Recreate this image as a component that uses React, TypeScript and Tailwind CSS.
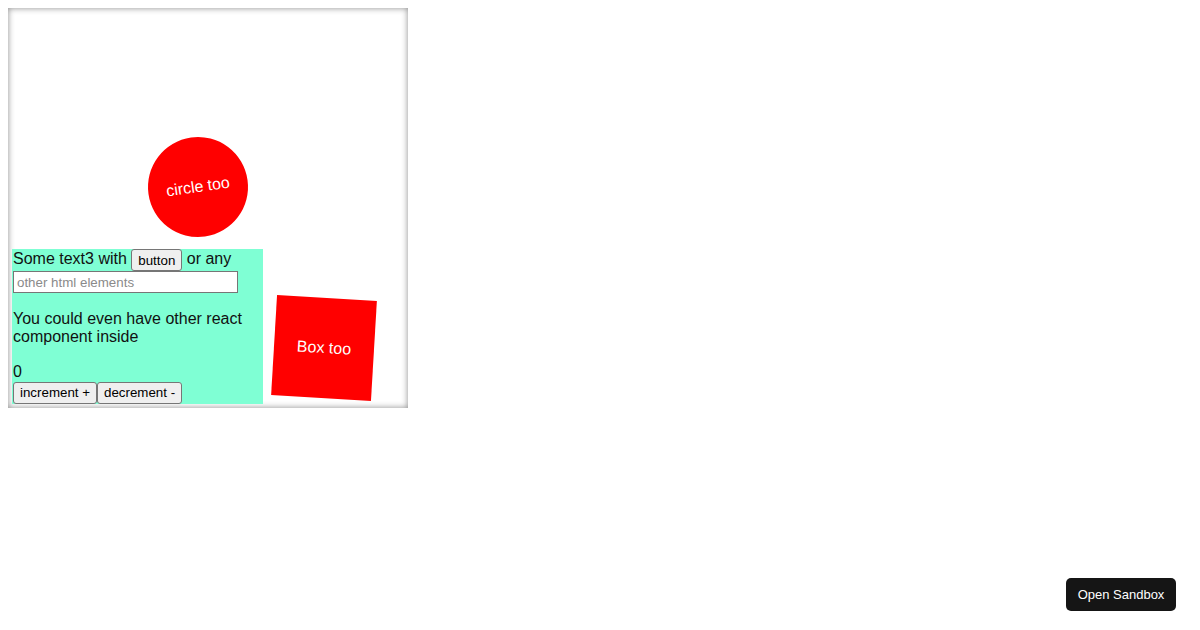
import React, { useState } from "react";

export default function App() {
  const [count, setCount] = useState(0);
  const btn =
    "border border-[#767676] bg-[#efefef] rounded-[3px] px-[6px] text-[13.33px] leading-[15px] py-[2.5px] text-black align-middle";
  return (
    <div className="w-[1200px] h-[630px] bg-white relative" style={{ fontFamily: '"Liberation Sans", Arial, sans-serif' }}>
      <div className="absolute left-[8px] top-[8px] w-[400px] h-[400px] overflow-hidden bg-white shadow-[inset_0_0_6px_#8a8a8a]">
        {/* circle */}
        <div className="absolute left-[140px] top-[129px] w-[100px] h-[100px] rounded-full bg-[#ff0000] flex items-center justify-center -rotate-[8deg]">
          <span className="text-white text-[16px]">circle too</span>
        </div>
        {/* html body */}
        <div className="absolute left-[4px] top-[241px] w-[251px] bg-[#7fffd4] text-[#111] text-[16px] leading-[18.5px] pl-[1px]">
          Some text3 with{" "}
          <button className={btn}>button</button> or any{" "}
          <input
            className="w-[225px] h-[22px] border border-[#767676] bg-white px-[3px] text-[13.33px] placeholder:text-[#8a8a8a] align-middle"
            placeholder="other html elements"
          />
          <p className="my-[16.5px]">You could even have other react component inside</p>
          <div>{count}</div>
          <div className="flex">
            <button className={btn} onClick={() => setCount(count + 1)}>increment +</button>
            <button className={btn} onClick={() => setCount(count - 1)}>decrement -</button>
          </div>
        </div>
        {/* box */}
        <div className="absolute left-[266px] top-[290px] w-[100px] h-[100px] bg-[#ff0000] flex items-center justify-center rotate-[3.4deg]">
          <span className="text-white text-[16px]">Box too</span>
        </div>
      </div>
      <button className="absolute right-[24px] bottom-[19px] w-[110px] h-[33px] rounded-[5px] bg-[#151515] text-white text-[13px] flex items-center justify-center">
        Open Sandbox
      </button>
    </div>
  );
}
